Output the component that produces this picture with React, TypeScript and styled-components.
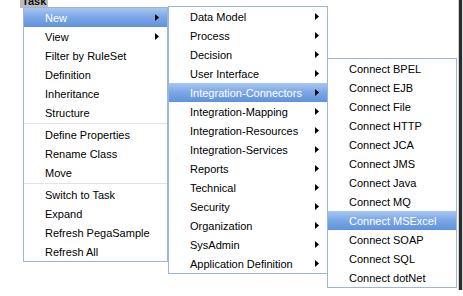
import React from "react";
import styled, { createGlobalStyle } from "styled-components";

const GlobalStyle = createGlobalStyle`
  html, body { margin: 0; padding: 0; background: #fff; }
  body { font-family: "Liberation Sans", Arial, sans-serif; }
`;

const Frame = styled.div`
  position: relative;
  display: flex;
  flex-direction: column;
  align-items: flex-start;
  width: 458px;
  height: 290px;
  background: #fff;
  box-shadow: 0 0 0 1px #cfcfcf, 0 0 1px 4px #2b2b2b;
`;

const TreeNode = styled.div`
  margin: -5px 0 0 20px;
  padding: 0 2px;
  background: #bdbdbd;
  color: #111;
  font-weight: bold;
  font-size: 11px;
  line-height: 13px;
`;

const Menu = styled.div<{ $left: number; $top: number; $width: number }>`
  position: absolute;
  left: ${(p) => p.$left}px;
  top: ${(p) => p.$top}px;
  width: ${(p) => p.$width}px;
  box-sizing: border-box;
  display: flex;
  flex-direction: column;
  background: #fff;
  border: 1px solid #9bb5dc;
`;

const Row = styled.div<{ $active?: boolean }>`
  height: 19px;
  display: flex;
  align-items: center;
  justify-content: space-between;
  padding: 0 8px 0 21px;
  font-size: 11px;
  color: ${(p) => (p.$active ? "#fff" : "#000")};
  background: ${(p) =>
    p.$active
      ? "linear-gradient(to bottom, #a9c7f1 0%, #7ea9e7 45%, #5f91dc 100%)"
      : "transparent"};
  white-space: nowrap;
`;

const Separator = styled.div`
  height: 3px;
  display: flex;
  align-items: center;
  &::after {
    content: "";
    flex: 1;
    height: 1px;
    background: #e2e2e2;
  }
`;

const Arrow = () => (
  <svg width="4" height="7" viewBox="0 0 4 7">
    <path d="M0 0 L4 3.5 L0 7 Z" fill="#000" />
  </svg>
);

type Item = { label: string; sub?: boolean; active?: boolean } | "sep";

const menu1: Item[] = [
  { label: "New", sub: true, active: true },
  { label: "View", sub: true },
  { label: "Filter by RuleSet" },
  { label: "Definition" },
  { label: "Inheritance" },
  { label: "Structure" },
  "sep",
  { label: "Define Properties" },
  { label: "Rename Class" },
  { label: "Move" },
  "sep",
  { label: "Switch to Task" },
  { label: "Expand" },
  { label: "Refresh PegaSample" },
  { label: "Refresh All" },
];

const menu2: Item[] = [
  "Data Model",
  "Process",
  "Decision",
  "User Interface",
  "Integration-Connectors",
  "Integration-Mapping",
  "Integration-Resources",
  "Integration-Services",
  "Reports",
  "Technical",
  "Security",
  "Organization",
  "SysAdmin",
  "Application Definition",
].map((label) => ({ label, sub: true, active: label === "Integration-Connectors" }));

const menu3: Item[] = [
  "BPEL",
  "EJB",
  "File",
  "HTTP",
  "JCA",
  "JMS",
  "Java",
  "MQ",
  "MSExcel",
  "SOAP",
  "SQL",
  "dotNet",
].map((n) => ({ label: `Connect ${n}`, active: n === "MSExcel" }));

const MenuList = ({ items }: { items: Item[] }) => (
  <>
    {items.map((it, i) =>
      it === "sep" ? (
        <Separator key={i} />
      ) : (
        <Row key={i} $active={it.active}>
          <span>{it.label}</span>
          {it.sub && <Arrow />}
        </Row>
      )
    )}
  </>
);

export default function App() {
  return (
    <>
      <GlobalStyle />
      <Frame>
        <TreeNode>Task</TreeNode>
        <Menu $left={23} $top={7} $width={145}>
          <MenuList items={menu1} />
        </Menu>
        <Menu $left={168} $top={6} $width={160}>
          <MenuList items={menu2} />
        </Menu>
        <Menu $left={327} $top={58} $width={130}>
          <MenuList items={menu3} />
        </Menu>
      </Frame>
    </>
  );
}
